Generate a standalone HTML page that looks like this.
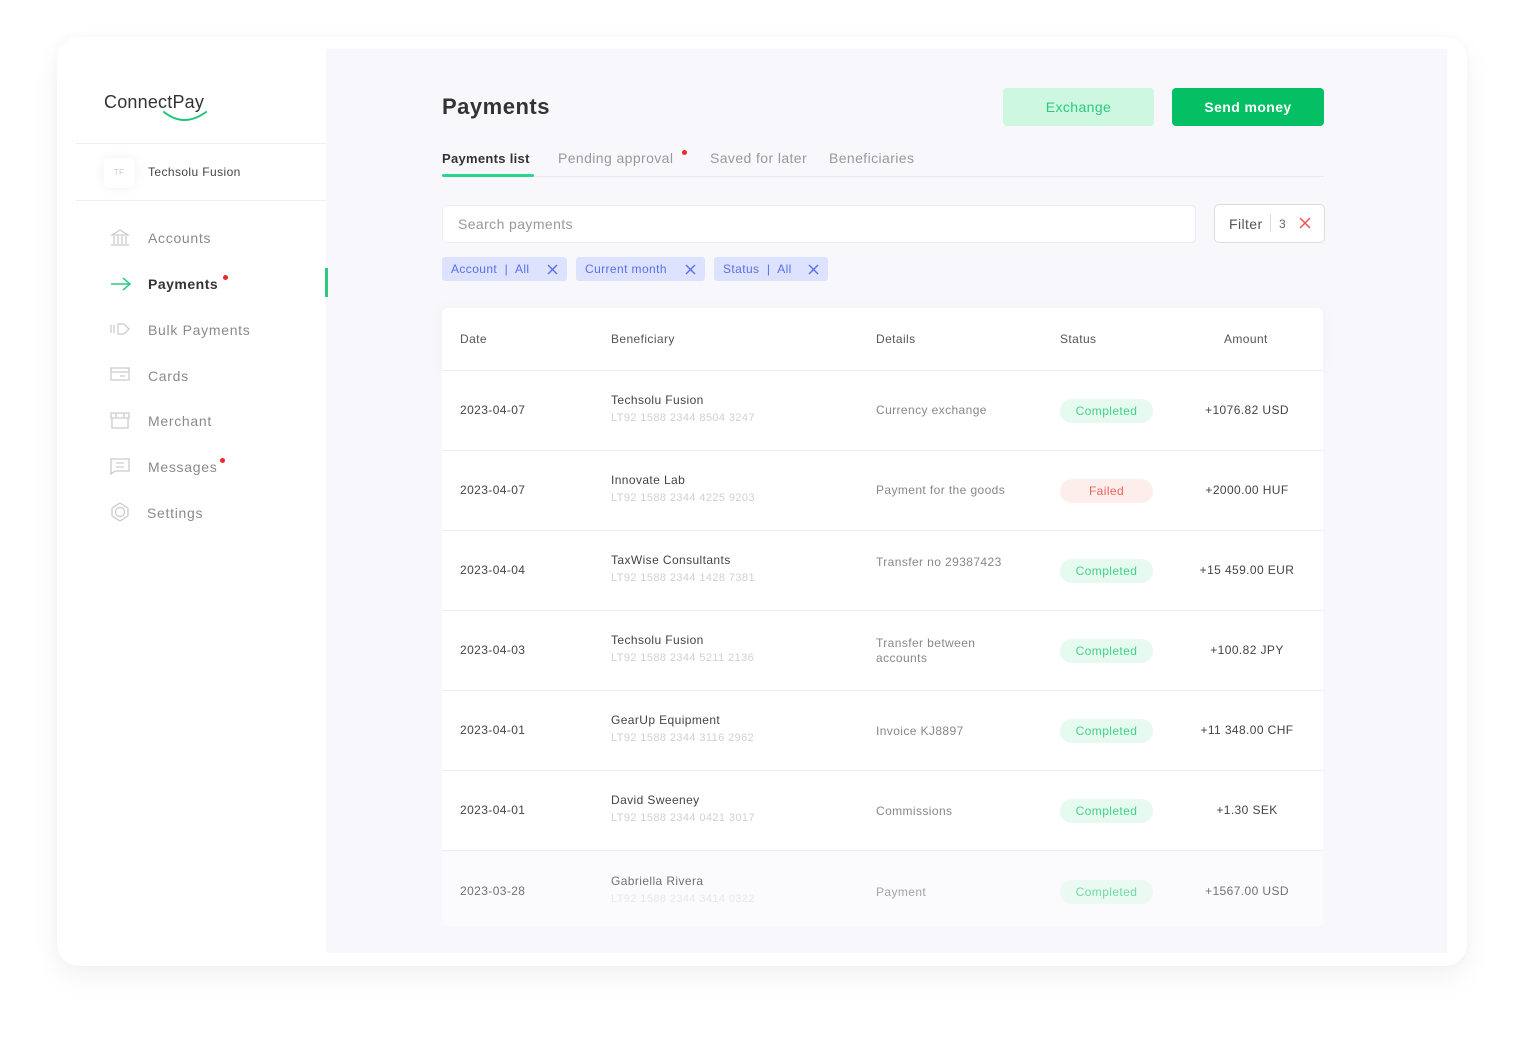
<!DOCTYPE html>
<html><head><meta charset="utf-8"><style>
*{margin:0;padding:0;box-sizing:border-box}
body{width:1524px;height:1041px;background:#fff;position:relative;overflow:hidden;font-family:"Liberation Sans",sans-serif;color:#333;letter-spacing:0.4px}
.a{position:absolute;white-space:nowrap}
.card{position:absolute;left:57px;top:37px;width:1410px;height:929px;background:#fff;border-radius:22px;box-shadow:0 12px 30px rgba(0,0,0,0.05),0 0 10px rgba(0,0,0,0.03)}
.main{position:absolute;left:326px;top:49px;width:1121px;height:904px;background:#f8f8fc}
.nav{font-size:14px;color:#8a8a8a;letter-spacing:0.7px}
.ic{position:absolute;left:110px}
.tag{position:absolute;top:257px;height:24px;background:#dde3ff;border-radius:3px;color:#5a6fe6;font-size:12px;line-height:24px;padding-left:9px}
.th{font-size:12px;color:#555;top:332px}
.row{position:absolute;left:442px;width:881px;height:80px;border-bottom:1px solid #efeff2;background:#fff}
.row .d{position:absolute;left:18px;top:32px;font-size:12px;color:#444}
.row .n{position:absolute;left:169px;top:22px;font-size:12px;color:#444}
.row .i{position:absolute;left:169px;top:41px;font-size:11px;color:#d0d0d0}
.row .t{position:absolute;left:434px;font-size:12px;color:#888;line-height:15px}
.row .s{position:absolute;left:618px;top:28px;width:93px;height:24px;border-radius:12px;background:#e6faef;color:#3ed389;font-size:12px;text-align:center;line-height:24px}
.row .s.f{background:#fdeeec;color:#f0625a}
.row .m{position:absolute;left:740px;width:130px;text-align:center;top:32px;font-size:12px;color:#444}
.dot{position:absolute;width:5px;height:5px;border-radius:50%;background:#f02828}
.tab{position:absolute;top:150px;font-size:14px;color:#999;letter-spacing:0.4px}
</style></head><body>
<div class="card"></div>
<div class="main"></div>
<!-- logo -->
<div class="a" style="left:104px;top:92px;font-size:18px;color:#333;letter-spacing:0.2px">ConnectPay</div>
<svg class="a" style="left:160px;top:108px" width="50" height="16"><path d="M4 4 Q24 20 46 4" stroke="#1ec77a" stroke-width="2" fill="none" stroke-linecap="round"/></svg>
<div class="a" style="left:76px;top:143px;width:250px;height:1px;background:#eee"></div>
<div class="a" style="left:76px;top:200px;width:250px;height:1px;background:#eee"></div>
<div class="a" style="left:104px;top:158px;width:30px;height:30px;background:#fff;border-radius:5px;box-shadow:0 0 14px rgba(0,0,0,0.06);font-size:8px;color:#ccc;text-align:center;line-height:30px">TF</div>
<div class="a" style="left:148px;top:165px;font-size:12px;color:#444">Techsolu Fusion</div>
<!-- nav -->
<svg class="ic" style="top:229px" width="20" height="18"><g stroke="#ccc" fill="none" stroke-width="1.3"><path d="M2 6 L10 1 L18 6 Z M4 7v8 M8 7v8 M12 7v8 M16 7v8 M1 16h18"/></g></svg>
<div class="a nav" style="left:148px;top:230px">Accounts</div>
<svg class="ic" style="top:276px" width="22" height="16"><path d="M1 8h19 M13 2l7 6-7 6" stroke="#2dc97f" stroke-width="1.5" fill="none"/></svg>
<div class="a" style="left:148px;top:276px;font-size:14px;font-weight:bold;color:#333;letter-spacing:0.5px">Payments</div>
<div class="dot" style="left:223px;top:275px"></div>
<div class="a" style="left:325px;top:268px;width:3px;height:29px;background:#2dc97f"></div>
<svg class="ic" style="top:320px" width="22" height="18"><g stroke="#ccc" fill="none" stroke-width="1.3"><path d="M1 5v8 M4 5v8 M8 4h6l5 5-5 5H8Z"/></g></svg>
<div class="a nav" style="left:148px;top:322px">Bulk Payments</div>
<svg class="ic" style="top:367px" width="20" height="15"><g stroke="#ccc" fill="none" stroke-width="1.3"><rect x="1" y="1" width="18" height="12"/><path d="M1 5h18 M10 9h5"/></g></svg>
<div class="a nav" style="left:148px;top:368px">Cards</div>
<svg class="ic" style="top:412px" width="20" height="17"><g stroke="#ccc" fill="none" stroke-width="1.3"><path d="M1 1h18v5H1Z M2 6v10h16V6 M6 1v5 M14 1v5"/></g></svg>
<div class="a nav" style="left:148px;top:413px">Merchant</div>
<svg class="ic" style="top:458px" width="20" height="17"><g stroke="#ccc" fill="none" stroke-width="1.3"><path d="M1 1h18v12H5l-4 3Z M6 5h8 M6 9h8"/></g></svg>
<div class="a nav" style="left:148px;top:459px">Messages</div>
<div class="dot" style="left:220px;top:458px"></div>
<svg class="ic" style="top:502px" width="20" height="20"><g stroke="#ccc" fill="none" stroke-width="1.3"><path d="M10 1l8 5v8l-8 5-8-5V6Z"/><circle cx="10" cy="10" r="4.5"/></g></svg>
<div class="a nav" style="left:147px;top:505px">Settings</div>
<!-- header -->
<div class="a" style="left:442px;top:94px;font-size:22px;font-weight:bold;color:#333;letter-spacing:0.5px">Payments</div>
<div class="a" style="left:1003px;top:88px;width:151px;height:38px;background:#cdf7e0;border-radius:4px;color:#2dc97f;font-size:14px;text-align:center;line-height:38px">Exchange</div>
<div class="a" style="left:1172px;top:88px;width:152px;height:38px;background:#04bf63;border-radius:4px;color:#fff;font-size:14px;font-weight:bold;text-align:center;line-height:38px">Send money</div>
<div class="tab" style="left:442px;top:151px;font-size:13px;font-weight:bold;color:#333;letter-spacing:0.3px">Payments list</div>
<div class="tab" style="left:558px">Pending approval</div>
<div class="dot" style="left:682px;top:150px"></div>
<div class="tab" style="left:710px">Saved for later</div>
<div class="tab" style="left:829px">Beneficiaries</div>
<div class="a" style="left:442px;top:176px;width:882px;height:1px;background:#eaeaee"></div>
<div class="a" style="left:442px;top:174px;width:92px;height:3px;background:#2dd58a;border-radius:2px"></div>
<!-- search -->
<div class="a" style="left:442px;top:205px;width:754px;height:38px;background:#fff;border:1px solid #ececf0;border-radius:5px;font-size:14px;color:#999;padding-left:15px;line-height:36px">Search payments</div>
<div class="a" style="left:1214px;top:204px;width:111px;height:39px;background:#fff;border:1px solid #ddd;border-radius:5px"></div>
<div class="a" style="left:1229px;top:216px;font-size:14px;color:#555">Filter</div>
<div class="a" style="left:1270px;top:214px;width:1px;height:18px;background:#ddd"></div>
<div class="a" style="left:1279px;top:217px;font-size:12px;color:#666">3</div>
<svg class="a" style="left:1299px;top:217px" width="12" height="12"><path d="M1 1l10 10M11 1L1 11" stroke="#f05050" stroke-width="1.5"/></svg>
<div class="tag" style="left:442px;width:125px">Account &nbsp;|&nbsp; All</div>
<div class="tag" style="left:576px;width:129px">Current month</div>
<div class="tag" style="left:714px;width:114px">Status &nbsp;|&nbsp; All</div>
<svg class="a" style="left:547px;top:264px" width="11" height="11"><path d="M1 1l9 9M10 1L1 10" stroke="#5a6fe6" stroke-width="1.4"/></svg>
<svg class="a" style="left:685px;top:264px" width="11" height="11"><path d="M1 1l9 9M10 1L1 10" stroke="#5a6fe6" stroke-width="1.4"/></svg>
<svg class="a" style="left:808px;top:264px" width="11" height="11"><path d="M1 1l9 9M10 1L1 10" stroke="#5a6fe6" stroke-width="1.4"/></svg>
<!-- table -->
<div class="a" style="left:442px;top:308px;width:881px;height:63px;background:#fff;border-radius:6px 6px 0 0;border-bottom:1px solid #efeff2;box-shadow:0 0 16px rgba(0,0,0,0.03)"></div>
<div class="a th" style="left:460px">Date</div>
<div class="a th" style="left:611px">Beneficiary</div>
<div class="a th" style="left:876px">Details</div>
<div class="a th" style="left:1060px">Status</div>
<div class="a th" style="left:1224px">Amount</div>

<div class="row" style="top:371px"><div class="d">2023-04-07</div><div class="n">Techsolu Fusion</div><div class="i">LT92 1588 2344 8504 3247</div><div class="t" style="top:32px">Currency exchange</div><div class="s">Completed</div><div class="m">+1076.82 USD</div></div>
<div class="row" style="top:451px"><div class="d">2023-04-07</div><div class="n">Innovate Lab</div><div class="i">LT92 1588 2344 4225 9203</div><div class="t" style="top:32px">Payment for the goods</div><div class="s f">Failed</div><div class="m">+2000.00 HUF</div></div>
<div class="row" style="top:531px"><div class="d">2023-04-04</div><div class="n">TaxWise Consultants</div><div class="i">LT92 1588 2344 1428 7381</div><div class="t" style="top:24px">Transfer no 29387423</div><div class="s">Completed</div><div class="m">+15 459.00 EUR</div></div>
<div class="row" style="top:611px"><div class="d">2023-04-03</div><div class="n">Techsolu Fusion</div><div class="i">LT92 1588 2344 5211 2136</div><div class="t" style="top:25px">Transfer between<br>accounts</div><div class="s">Completed</div><div class="m">+100.82 JPY</div></div>
<div class="row" style="top:691px"><div class="d">2023-04-01</div><div class="n">GearUp Equipment</div><div class="i">LT92 1588 2344 3116 2962</div><div class="t" style="top:33px">Invoice KJ8897</div><div class="s">Completed</div><div class="m">+11 348.00 CHF</div></div>
<div class="row" style="top:771px"><div class="d">2023-04-01</div><div class="n">David Sweeney</div><div class="i">LT92 1588 2344 0421 3017</div><div class="t" style="top:33px">Commissions</div><div class="s">Completed</div><div class="m">+1.30 SEK</div></div>
<div class="row" style="top:852px;height:74px;background:#fcfcfe;border-bottom:none;opacity:0.75"><div class="d">2023-03-28</div><div class="n">Gabriella Rivera</div><div class="i" style="color:#e2e2e2">LT92 1588 2344 3414 0322</div><div class="t" style="top:33px">Payment</div><div class="s">Completed</div><div class="m">+1567.00 USD</div></div>
</body></html>
